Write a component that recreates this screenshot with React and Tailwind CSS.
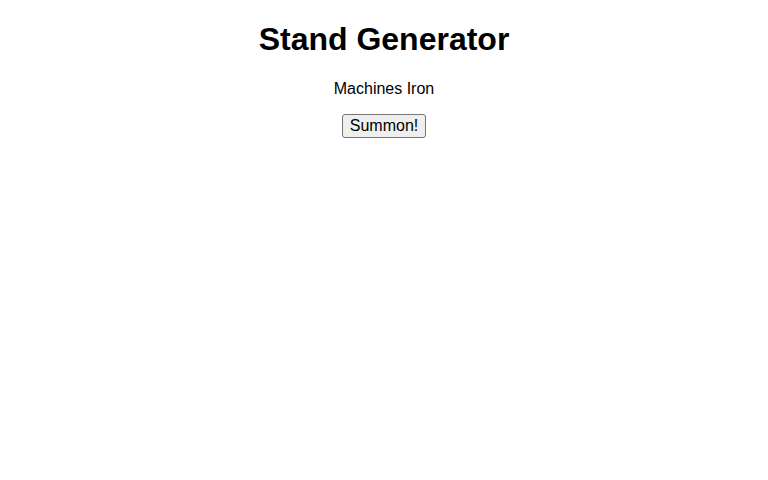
import { useState } from "react";

const names = ["Machines Iron", "Crimson Tide", "Silver Echo", "Golden Hour", "Star Weaver"];

export default function App() {
  const [name, setName] = useState(names[0]);

  const summon = () => setName(names[Math.floor(Math.random() * names.length)]);

  return (
    <div className="min-h-[480px] bg-white text-black text-center font-['Liberation_Sans',Arial,sans-serif]">
      <h1 className="pt-[21px] text-[32px] leading-[37px] font-bold">Stand Generator</h1>
      <p className="mt-[22px] text-base leading-[18px]">{name}</p>
      <button
        onClick={summon}
        className="mt-4 h-6 px-[7px] text-base leading-[18px] bg-[#efefef] border border-[#767676] rounded-[3px] hover:bg-[#e5e5e5]"
      >
        Summon!
      </button>
    </div>
  );
}
